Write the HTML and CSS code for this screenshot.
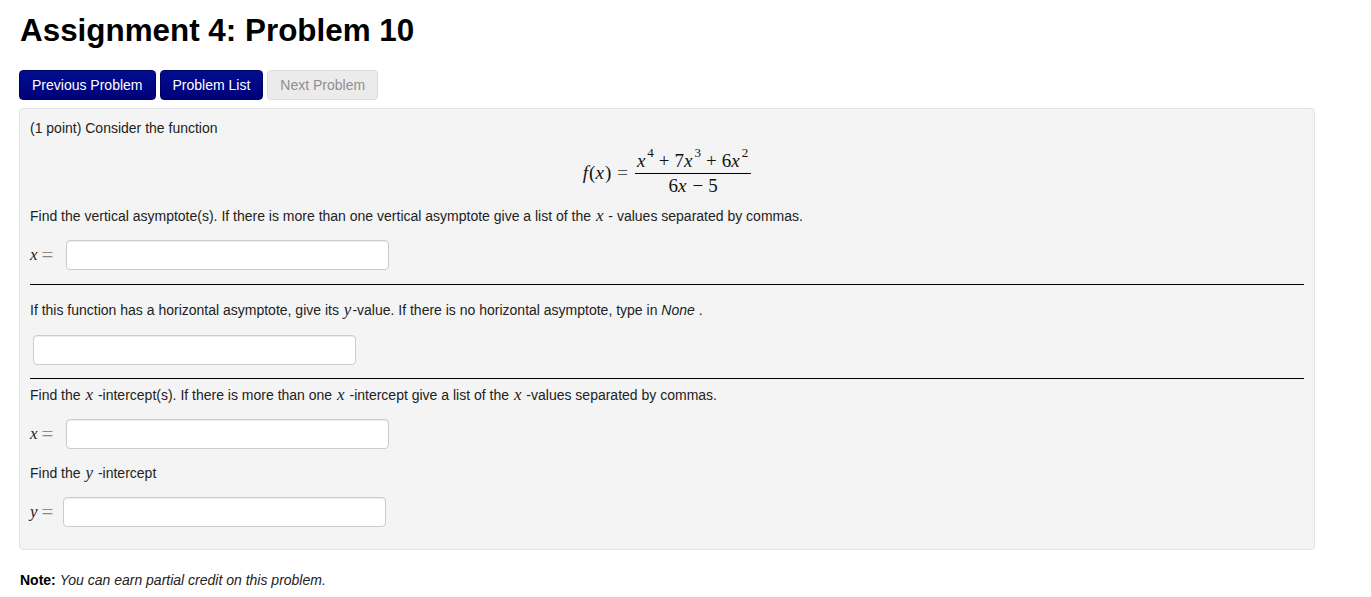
FILE: index.html
```html
<!DOCTYPE html>
<html lang="en">
<head>
<meta charset="utf-8">
<title>Assignment 4: Problem 10</title>
<link rel="stylesheet" href="styles.css">
</head>
<body>
<div class="page">
  <h1 class="title">Assignment 4: Problem 10</h1>
  <div class="nav">
    <a class="btn btn-primary" href="#">Previous Problem</a>
    <a class="btn btn-primary" href="#">Problem List</a>
    <span class="btn btn-disabled">Next Problem</span>
  </div>
  <div class="problem">
    <p class="line">(1 point) Consider the function</p>
    <div class="display-math">
      <span class="m">f</span><span class="mn">(</span><span class="m">x</span><span class="mn">)</span><span class="rel">=</span>
      <span class="frac">
        <span class="num"><span class="m mx">x</span><sup>4</sup><span class="op">+</span>7<span class="m mx">x</span><sup>3</sup><span class="op">+</span>6<span class="m mx">x</span><sup>2</sup></span>
        <span class="den">6<span class="m">x</span><span class="op">−</span>5</span>
      </span>
    </div>
    <p class="line">Find the vertical asymptote(s). If there is more than one vertical asymptote give a list of the <span class="im">x</span> - values separated by commas.</p>
    <div class="answer-row row-1">
      <span class="label"><span class="im">x</span><span class="eq">=</span></span>
      <input class="answer" type="text">
    </div>
    <hr class="rule">
    <p class="line line-after-rule">If this function has a horizontal asymptote, give its <span class="im">y</span>-value. If there is no horizontal asymptote, type in <em>None</em> .</p>
    <div class="answer-row row-2">
      <input class="answer indent" type="text">
    </div>
    <hr class="rule rule-2">
    <p class="line line-tight">Find the <span class="im">x</span> -intercept(s). If there is more than one <span class="im">x</span> -intercept give a list of the <span class="im">x</span> -values separated by commas.</p>
    <div class="answer-row">
      <span class="label"><span class="im">x</span><span class="eq">=</span></span>
      <input class="answer" type="text">
    </div>
    <p class="line line-mid">Find the <span class="im">y</span> -intercept</p>
    <div class="answer-row">
      <span class="label label-y"><span class="im">y</span><span class="eq">=</span></span>
      <input class="answer" type="text">
    </div>
  </div>
  <p class="note"><strong>Note:</strong> <em>You can earn partial credit on this problem.</em></p>
</div>
</body>
</html>
```

FILE: styles.css
```css
html, body {
  margin: 0;
  padding: 0;
  background: #ffffff;
}

body {
  font-family: "Liberation Sans", Arial, sans-serif;
  font-size: 14px;
  line-height: 20px;
  color: #222222;
}

.page {
  padding-left: 19px;
}

.title {
  margin: 11px 0 0 1px;
  font-size: 31.4px;
  line-height: 40px;
  font-weight: bold;
  color: #000000;
}

.nav {
  display: flex;
  gap: 4px;
  margin-top: 19px;
}

.btn {
  display: inline-block;
  box-sizing: border-box;
  height: 30px;
  padding: 4px 12px;
  border: 1px solid transparent;
  border-radius: 4px;
  font-size: 14px;
  line-height: 20px;
  text-decoration: none;
}

.btn-primary {
  color: #ffffff;
  background: linear-gradient(#000e92, #000078);
  border-color: #000060;
}

.btn-disabled {
  color: #8f8f8f;
  background: #ebebeb;
  border-color: #dcdcdc;
}

.problem {
  box-sizing: border-box;
  width: 1296px;
  height: 442px;
  margin-top: 8px;
  padding: 9px 10px 0 10px;
  background: #f4f4f4;
  border: 1px solid #e3e3e3;
  border-radius: 4px;
}

.line {
  margin: 0;
}

.display-math {
  display: flex;
  justify-content: center;
  align-items: center;
  height: 50px;
  margin: 10px 0 8px 0;
  font-family: "Liberation Serif", "Times New Roman", serif;
  font-size: 19px;
  color: #111111;
}

.m, .im {
  font-family: "Liberation Serif", "Times New Roman", serif;
  font-style: italic;
}

.m {
  padding-right: 1px;
}

.mx {
  padding-right: 2px;
}

.im {
  font-size: 17px;
  padding: 0 1px;
}

.mn {
  font-style: normal;
}

.rel {
  margin: 0 7px 0 6px;
  color: #555555;
}

.op {
  margin: 0 5px;
}

.frac {
  display: inline-flex;
  flex-direction: column;
  align-items: center;
  vertical-align: middle;
}

.num {
  padding: 0 3px 1px 2px;
  line-height: 22px;
}

.num sup {
  font-size: 13px;
  line-height: 0;
  position: relative;
  top: -2px;
  vertical-align: super;
}

.den {
  align-self: stretch;
  text-align: center;
  border-top: 1px solid #000000;
  padding-top: 1px;
  line-height: 22px;
}

.answer-row {
  display: flex;
  align-items: center;
  margin-top: 14px;
}

.label {
  display: inline-flex;
  align-items: center;
  width: 36px;
  font-size: 16px;
  color: #222222;
}

.label .im {
  padding: 0;
}

.label-y {
  width: 33px;
}

.eq {
  margin-left: 4px;
  color: #8a8a8a;
  font-family: "Liberation Serif", "Times New Roman", serif;
  font-size: 21px;
}

.answer {
  box-sizing: border-box;
  width: 323px;
  height: 30px;
  margin: 0;
  padding: 4px 6px;
  background: #ffffff;
  border: 1px solid #cccccc;
  border-radius: 4px;
  box-shadow: inset 0 1px 1px rgba(0, 0, 0, 0.075);
  font: inherit;
}

.indent {
  margin-left: 3px;
}

.rule {
  height: 0;
  margin: 14px 0 0 0;
  border: 0;
  border-top: 1px solid #000000;
}

.rule-2 {
  margin-top: 13px;
}

.line-after-rule {
  margin-top: 15px;
}

.line-tight {
  margin-top: 6px;
}

.line-mid {
  margin-top: 14px;
}

.row-2 {
  margin-top: 15px;
}

.note {
  margin: 20px 0 0 1px;
}

.note strong {
  color: #000000;
}
```
